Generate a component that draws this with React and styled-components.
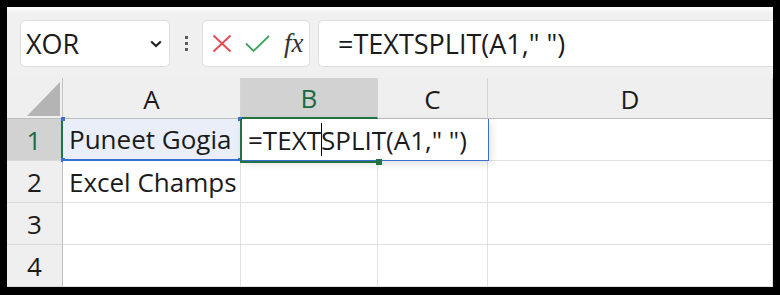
import React from 'react'
import styled, { createGlobalStyle } from 'styled-components'

const GlobalStyle = createGlobalStyle`
  body {
    margin: 0;
    background: #000;
  }
`

const Frame = styled.div`
  width: 780px;
  height: 295px;
  box-sizing: border-box;
  background: #000;
  padding: 7px 7px 8px 7px;
  font-family: "Open Sans", "Noto Sans", sans-serif;
  color: #1b1b1b;
`

const Window = styled.div`
  height: 100%;
  background: #f0f0f0;
  overflow: hidden;
  display: flex;
  flex-direction: column;
`

// formula bar strip
const Toolbar = styled.div`
  height: 71px;
  flex: none;
  box-sizing: border-box;
  padding: 13px 0 0 13px;
  display: flex;
  align-items: flex-start;
  background: linear-gradient(#fcfcfc, #f0f0f0 7px);
`

const Box = styled.div`
  height: 47px;
  box-sizing: border-box;
  background: #fff;
  border: 1px solid #dedede;
  border-radius: 5px;
  display: flex;
  align-items: center;
`

const NameBox = styled(Box)`
  width: 150px;
  justify-content: space-between;
  padding: 0 7px 0 5px;
  font-size: 27px;
`

const Grip = styled.div`
  width: 32px;
  height: 47px;
  display: flex;
  flex-direction: column;
  align-items: center;
  justify-content: center;
  gap: 3px;
  span {
    width: 3px;
    height: 3px;
    background: #5a5a5a;
  }
`

const ActionBox = styled(Box)`
  width: 108px;
  padding: 0 0 0 9px;
  gap: 13px;
`

const Fx = styled.span`
  font-family: "Liberation Serif", "DejaVu Serif", serif;
  font-style: italic;
  font-size: 27px;
  color: #333;
  margin-left: 1px;
`

const FormulaBar = styled(Box)`
  flex: 1;
  margin-left: 8px;
  border-right: none;
  border-radius: 5px 0 0 5px;
  padding-left: 19px;
  font-size: 27px;
  white-space: pre;
`

// sheet grid
const Sheet = styled.div`
  flex: 1;
  display: grid;
  grid-template-columns: 56px 178px 137px 110px 1fr;
  grid-template-rows: 41px repeat(4, 42px);
  background: #fff;
`

const Corner = styled.div`
  background: #efefef;
  border-right: 1px solid #c4c4c4;
  border-bottom: 1px solid #bdbdbd;
  position: relative;
  svg {
    display: block;
  }
`

const ColHead = styled.div`
  background: ${p => (p.$active ? '#d2d2d2' : '#efefef')};
  color: ${p => (p.$active ? '#1d6b3c' : '#1b1b1b')};
  border-right: 1px solid #d4d4d4;
  border-bottom: ${p => (p.$active ? '2px solid #217346' : '1px solid #bdbdbd')};
  display: flex;
  align-items: center;
  justify-content: center;
  font-size: 26px;
  padding-top: 1px;
`

const RowHead = styled.div`
  background: ${p => (p.$active ? '#d2d2d2' : '#efefef')};
  color: ${p => (p.$active ? '#1d6b3c' : '#1b1b1b')};
  border-right: ${p => (p.$active ? '2px solid #217346' : '1px solid #bdbdbd')};
  border-bottom: 1px solid #d9d9d9;
  display: flex;
  align-items: center;
  justify-content: center;
  font-size: 26px;
`

const Cell = styled.div`
  position: relative;
  background: ${p => (p.$ref ? '#e9eef8' : '#fff')};
  border-right: 1px solid #e1e1e1;
  border-bottom: ${p => (p.$ref ? '2px solid #3b6fcf' : '1px solid #e1e1e1')};
  display: flex;
  align-items: center;
  padding-left: 6px;
  font-size: 26px;
  white-space: nowrap;
  ${p => p.$active && 'z-index: 2;'}
`

const Handle = styled.span`
  position: absolute;
  width: 4px;
  height: 4px;
  background: #3b6fcf;
  ${p => (p.$top ? 'top: -2px;' : 'bottom: -3px;')}
  ${p => (p.$left ? 'left: -2px;' : 'right: -2px;')}
`

const Editor = styled.div`
  position: absolute;
  left: 0;
  top: 0;
  width: 248px;
  height: 42px;
  box-sizing: border-box;
  background: #fff;
  border-right: 1px solid #3b6fcf;
  border-bottom: 1px solid #3b6fcf;
  box-shadow: 2px 3px 8px rgba(0, 0, 0, 0.12);
  display: flex;
  align-items: center;
  padding-left: 7px;
  font-size: 26px;
  white-space: pre;
`

const Caret = styled.span`
  display: inline-block;
  width: 1px;
  height: 33px;
  background: #000;
  margin-right: -1px;
`

const ActiveFrame = styled.div`
  position: absolute;
  left: -1px;
  top: 0;
  width: calc(100% + 1px);
  height: calc(100% + 1px);
  border-left: 2px solid #217346;
  border-bottom: 2px solid #217346;
  pointer-events: none;
  span {
    position: absolute;
    right: -3px;
    bottom: -4px;
    width: 6px;
    height: 6px;
    background: #217346;
  }
`

const formula = '=TEXTSPLIT(A1," ")'
const cols = ['A', 'B', 'C', 'D']
const data = [
  ['Puneet Gogia', '', '', ''],
  ['Excel Champs', '', '', ''],
  ['', '', '', ''],
  ['', '', '', ''],
]

export default function App() {
  return (
    <Frame>
      <GlobalStyle />
      <Window>
        <Toolbar>
          <NameBox>
            XOR
            <svg width="12" height="8" viewBox="0 0 12 8">
              <path d="M1.2 1.5 L6 6 L10.8 1.5" fill="none" stroke="#222" strokeWidth="2.2" />
            </svg>
          </NameBox>
          <Grip>
            <span />
            <span />
            <span />
          </Grip>
          <ActionBox>
            <svg width="20" height="19" viewBox="0 0 20 19">
              <path d="M1.5 1.5 L18.5 17.5 M18.5 1.5 L1.5 17.5" stroke="#e5484d" strokeWidth="1.8" fill="none" />
            </svg>
            <svg width="25" height="18" viewBox="0 0 25 18">
              <path d="M1 8.5 L8.5 16 L24 1" stroke="#3fa45b" strokeWidth="1.8" fill="none" />
            </svg>
            <Fx>fx</Fx>
          </ActionBox>
          <FormulaBar>{formula}</FormulaBar>
        </Toolbar>
        <Sheet>
          <Corner>
            <svg width="55" height="40" viewBox="0 0 55 40">
              <polygon points="20,38 53,4 53,38" fill="#b4b4b4" />
            </svg>
          </Corner>
          {cols.map(c => (
            <ColHead key={c} $active={c === 'B'}>
              {c}
            </ColHead>
          ))}
          {data.map((row, r) => (
            <React.Fragment key={r}>
              <RowHead $active={r === 0}>{r + 1}</RowHead>
              {row.map((v, c) => {
                if (r === 0 && c === 0) {
                  return (
                    <Cell key={c} $ref>
                      {v}
                      <Handle $top $left />
                      <Handle $top />
                      <Handle $left />
                      <Handle />
                    </Cell>
                  )
                }
                if (r === 0 && c === 1) {
                  return (
                    <Cell key={c} $active>
                      <Editor>
                        =TEXT<Caret />SPLIT(A1," ")
                      </Editor>
                      <ActiveFrame>
                        <span />
                      </ActiveFrame>
                    </Cell>
                  )
                }
                return <Cell key={c}>{v}</Cell>
              })}
            </React.Fragment>
          ))}
        </Sheet>
      </Window>
    </Frame>
  )
}
